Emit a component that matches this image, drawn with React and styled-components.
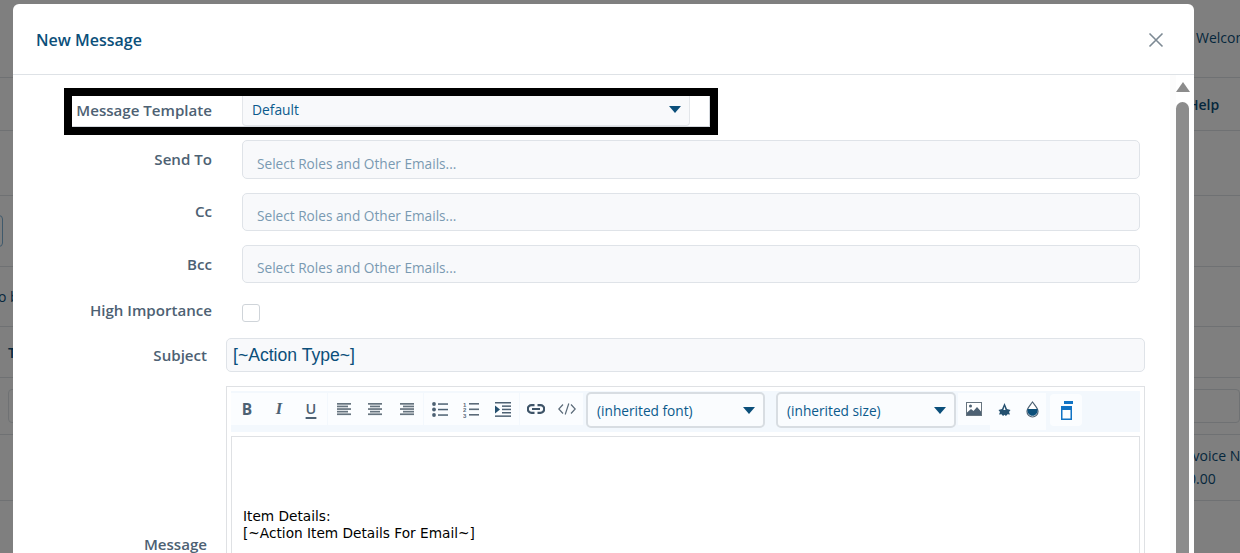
import React from 'react';
import styled, { createGlobalStyle } from 'styled-components';

const GlobalStyle = createGlobalStyle`
  html, body {
    margin: 0;
    height: 100%;
    overflow: hidden;
    background: #fff;
    font-family: "Open Sans", "Noto Sans", sans-serif;
  }
`;

const Page = styled.div`
  position: relative;
  width: 1240px;
  height: 553px;
  overflow: hidden;
`;

const Band = styled.div`
  display: flex;
  align-items: center;
  justify-content: space-between;
  box-sizing: border-box;
  height: ${(p) => p.$height}px;
  padding-left: ${(p) => p.$left || 0}px;
  padding-bottom: ${(p) => p.$lift || 0}px;
  border-bottom: 1px solid #dee2e6;
  color: #0b4f7a;
  font-size: 14px;
  font-weight: ${(p) => p.$weight || 400};
  white-space: nowrap;
`;

const FlushBox = styled.div`
  width: 40px;
  height: 32px;
  margin-left: -37px;
  box-sizing: border-box;
  border: 1px solid #7fb2d6;
  border-radius: 4px;
`;

const ClippedText = styled.span`
  margin-left: -7px;
`;

const WideInput = styled.div`
  width: 1300px;
  height: 34px;
  margin-left: 8px;
  box-sizing: border-box;
  border: 1px solid #dee2e6;
  border-radius: 4px;
`;

const Cell = styled.div`
  line-height: 23px;
  width: 60px;
`;

const Backdrop = styled.div`
  position: absolute;
  inset: 0;
  background: rgba(0, 0, 0, 0.5);
`;

const Modal = styled.div`
  position: absolute;
  left: 13px;
  top: 4px;
  width: 1181px;
  height: 600px;
  background: #fff;
  border-radius: 6px;
  display: flex;
  flex-direction: column;
`;

const Header = styled.div`
  display: flex;
  flex-shrink: 0;
  align-items: center;
  justify-content: space-between;
  box-sizing: border-box;
  height: 71px;
  padding: 1px 30px 0 23px;
  border-bottom: 1px solid #dee2e6;
`;

const Title = styled.h5`
  margin: 0;
  font-size: 16px;
  font-weight: 600;
  color: #0b4f7a;
`;

const Body = styled.div`
  flex: 1;
  display: flex;
  min-height: 0;
`;

const Form = styled.div`
  width: 1157px;
  box-sizing: border-box;
`;

const Scrollbar = styled.div`
  width: 24px;
  box-sizing: border-box;
  padding: 7px 5px 0 6px;
  background: linear-gradient(to right, #fcfcfc 6px, #fff 6px);
  display: flex;
  flex-direction: column;
  align-items: center;
`;

const ScrollArrow = styled.div`
  width: 0;
  height: 0;
  border-left: 7px solid transparent;
  border-right: 7px solid transparent;
  border-bottom: 10px solid #8c8c8c;
`;

const ScrollThumb = styled.div`
  width: 13px;
  flex: 1;
  margin-top: 10px;
  background: #8c8c8c;
  border-radius: 7px 7px 0 0;
`;

const Highlight = styled.div`
  display: flex;
  align-items: flex-start;
  width: 638px;
  height: 31px;
  margin: 21px 0 13px 59px;
  outline: 8px solid #000;
  box-sizing: border-box;
  border-right: 1px solid #d5d9de;
  border-bottom: 1px solid #d5d9de;
`;

const Row = styled.div`
  display: flex;
  align-items: flex-start;
  margin-top: ${(p) => p.$top || 0}px;
`;

const Label = styled.label`
  box-sizing: border-box;
  width: ${(p) => p.$width || 199}px;
  margin-right: ${(p) => p.$gap ?? 30}px;
  margin-top: ${(p) => p.$offset || 0}px;
  text-align: right;
  font-size: 15.1px;
  line-height: 20px;
  font-weight: 600;
  color: #4d6173;
  white-space: nowrap;
`;

const SelectBox = styled.div`
  display: flex;
  align-items: center;
  justify-content: space-between;
  box-sizing: border-box;
  width: 448px;
  height: 30px;
  padding: 0 8px 3px 9px;
  background: #f8f9fb;
  border: 1px solid #e3e6ea;
  border-top: none;
  border-radius: 0 0 4px 4px;
  font-size: 13.8px;
  color: #0b5a8c;
`;

const Input = styled.div`
  box-sizing: border-box;
  width: 898px;
  height: ${(p) => p.$height}px;
  padding: ${(p) => p.$inset}px 14px 0;
  background: #f8f9fb;
  border: 1px solid #dfe3e8;
  border-radius: 5px;
  font-size: 13.65px;
  line-height: 18px;
  color: #7a9ab2;
`;

const Checkbox = styled.div`
  box-sizing: border-box;
  width: 18px;
  height: 18px;
  margin-top: 4px;
  border: 1px solid #cfd4d9;
  border-radius: 3px;
  background: #fff;
`;

const SubjectInput = styled.div`
  box-sizing: border-box;
  width: 919px;
  height: 34px;
  padding: 0 6px;
  background: #f8f9fb;
  border: 1px solid #dfe3e8;
  border-radius: 5px;
  font-family: "Liberation Sans", Arial, sans-serif;
  font-size: 17.6px;
  line-height: 32px;
  color: #0b4f7a;
`;

const Editor = styled.div`
  box-sizing: border-box;
  width: 919px;
  height: 300px;
  padding: 4px;
  border: 1px solid #dfe1e4;
`;

const Toolbar = styled.div`
  display: flex;
  align-items: flex-start;
  box-sizing: border-box;
  height: 41px;
  padding-top: 2px;
  background: #f3f8fd;
`;

const ToolGroup = styled.div`
  display: flex;
  height: 32px;
  margin-left: ${(p) => p.$left || 0}px;
  background: #fbfdff;
`;

const ToolButton = styled.button`
  display: flex;
  align-items: center;
  justify-content: center;
  width: ${(p) => p.$width || 32}px;
  height: ${(p) => p.$height || 32}px;
  padding: 0 0 ${(p) => p.$lift || 0}px ${(p) => p.$shift || 0}px;
  border: none;
  background: ${(p) => p.$bg || 'transparent'};
  border-radius: ${(p) => p.$radius || 0}px;
  margin-top: ${(p) => p.$top || 0}px;
  margin-left: ${(p) => p.$left || 0}px;
`;

const ToolSelect = styled.div`
  display: flex;
  align-items: center;
  justify-content: space-between;
  box-sizing: border-box;
  width: ${(p) => p.$width}px;
  height: 36px;
  margin-top: -1px;
  margin-left: ${(p) => p.$left}px;
  padding: 0 8px 0 9px;
  background: #fafcfe;
  border: 2px solid #d8dde2;
  border-radius: 5px;
  font-size: 13.7px;
  color: #0b5a8c;
`;

const Content = styled.div`
  box-sizing: border-box;
  height: 250px;
  margin-top: 4px;
  padding: 71px 11px 0;
  border: 1px solid #dfe1e4;
  font-family: "DejaVu Sans", Verdana, sans-serif;
  font-size: 13.7px;
  line-height: 17px;
  color: #000;
`;

const Glyph = styled.span`
  font: ${(p) => p.$font || '700 15.5px "Open Sans", sans-serif'};
  color: #4d6173;
  text-decoration: ${(p) => (p.$underline ? 'underline' : 'none')};
  text-decoration-thickness: 1.5px;
  text-underline-offset: 3px;
`;

const Caret = () => (
  <svg width="12" height="7" viewBox="0 0 12 7">
    <path d="M0 0h12L6 7z" fill="#0b4f7a" />
  </svg>
);

const Lines = ({ rows }) => (
  <svg width="14" height="13" viewBox="0 0 14 13" fill="#66747f">
    {rows.map(([x, w], i) => (
      <rect key={i} x={x} y={i * 2.6} width={w} height="1.7" />
    ))}
  </svg>
);

const BulletList = () => (
  <svg width="16" height="15" viewBox="0 0 16 15" fill="#4d6173">
    <circle cx="2" cy="2" r="1.9" />
    <circle cx="2" cy="7.500" r="1.9" />
    <circle cx="2" cy="13" r="1.9" />
    <rect x="6" y="1.300" width="10" height="1.500" />
    <rect x="6" y="6.800" width="10" height="1.500" />
    <rect x="6" y="12.300" width="10" height="1.500" />
  </svg>
);

const NumberList = () => (
  <svg width="16" height="17" viewBox="0 0 16 17" fill="#5b6b79">
    <text x="0" y="5.500" fontSize="6" fontFamily="Liberation Sans, sans-serif" fontWeight="700">1</text>
    <text x="0" y="11" fontSize="6" fontFamily="Liberation Sans, sans-serif" fontWeight="700">2</text>
    <text x="0" y="16.500" fontSize="6" fontFamily="Liberation Sans, sans-serif" fontWeight="700">3</text>
    <rect x="6" y="2" width="10" height="1.600" />
    <rect x="6" y="7.500" width="10" height="1.600" />
    <rect x="6" y="13" width="10" height="1.600" />
  </svg>
);

const Indent = () => (
  <svg width="16" height="15" viewBox="0 0 16 15" fill="#4d6173">
    <rect width="16" height="1.500" />
    <rect x="7" y="3.400" width="9" height="1.500" />
    <rect x="7" y="6.700" width="9" height="1.500" />
    <rect x="7" y="10" width="9" height="1.500" />
    <rect y="13.400" width="16" height="1.500" />
    <path d="M0 3.500l5 4-5 4z" fill="#24506f" />
  </svg>
);

const LinkIcon = () => (
  <svg width="18" height="10" viewBox="0 0 18 10" fill="none" stroke="#3e5468" strokeWidth="2.200">
    <path d="M7.500 1.200H4.600a3.800 3.800 0 0 0 0 7.600h2.900M10.500 1.200h2.900a3.800 3.800 0 0 1 0 7.600h-2.900M5 5h8" />
  </svg>
);

const CodeIcon = () => (
  <svg width="18" height="12" viewBox="0 0 18 12" fill="none" stroke="#5b6b79" strokeWidth="1.200">
    <path d="M5 1.500L.8 6 5 10.500M13 1.500L17.200 6 13 10.500M10.800 .5L7.200 11.500" />
  </svg>
);

const ImageIcon = () => (
  <svg width="16" height="14" viewBox="0 0 16 14">
    <rect x=".5" y=".5" width="15" height="13" fill="#fff" stroke="#66747f" />
    <circle cx="4.500" cy="4" r="1.500" fill="#4d6173" />
    <path d="M1 13V10.500l4-3.500 2.500 2L11 5l4 4.500V13z" fill="#4d6173" />
  </svg>
);

const FontColor = () => (
  <svg width="13" height="13" viewBox="0 0 13 13" fill="#24506f">
    <path d="M6.500 0L9 6l3.500 1-1.500 2 1 2.500-2.500-.3L8 13l-1.500-1.200L5 13l-1.500-1.800-2.500.3L2 9 .5 7 4 6z" />
    <path d="M6.500 3.500L7.600 7H5.400z" fill="#fbfdff" />
  </svg>
);

const DropIcon = () => (
  <svg width="13" height="17" viewBox="0 0 13 17">
    <path d="M6.500 1C4 4.500 1 7 1 10.500a5.500 5.500 0 0 0 11 0C12 7 9 4.500 6.500 1z" fill="#fff" stroke="#4d6173" strokeWidth="1.200" />
    <path d="M1.600 8h9.800c.7 3.500-1.400 6.800-4.900 6.800S.9 11.500 1.600 8z" fill="#0b4f7a" />
  </svg>
);

const TemplateIcon = () => (
  <svg width="13" height="19" viewBox="0 0 13 19" fill="#1173c4">
    <rect x="3" width="9" height="3" />
    <path d="M0 5h11v14H0zM1.500 9v8.500h8V9z" fillRule="evenodd" />
  </svg>
);

const CloseIcon = () => (
  <svg width="16" height="16" viewBox="0 0 16 16" fill="none" stroke="#7d8a94" strokeWidth="1.600">
    <path d="M1.500 1.500l13 13M14.500 1.500l-13 13" />
  </svg>
);

const addressFields = [
  { label: 'Send To', top: 0, height: 39, offset: 9, inset: 14 },
  { label: 'Cc', top: 14, height: 38, offset: 8, inset: 13 },
  { label: 'Bcc', top: 14, height: 38, offset: 9, inset: 13 },
];

export default function App() {
  return (
    <Page>
      <GlobalStyle />
      <Band $height={78} $left={1196} $lift={3}>Welcome</Band>
      <Band $height={53} $left={1188} $weight={600}>Help</Band>
      <Band $height={65} />
      <Band $height={71}><FlushBox /></Band>
      <Band $height={60}><ClippedText>to be</ClippedText></Band>
      <Band $height={51} $left={8} $weight={600}>T</Band>
      <Band $height={57}><WideInput /></Band>
      <Band $height={66} $left={12} $lift={2}>
        <span>I</span>
        <Cell>Invoice No<br />$0.00</Cell>
      </Band>
      <Backdrop />
      <Modal>
        <Header>
          <Title>New Message</Title>
          <CloseIcon />
        </Header>
        <Body>
          <Form>
            <Highlight>
              <Label $width={140} $offset={4}>Message Template</Label>
              <SelectBox>
                Default
                <Caret />
              </SelectBox>
            </Highlight>
            {addressFields.map((f) => (
              <Row key={f.label} $top={f.top}>
                <Label $offset={f.offset}>{f.label}</Label>
                <Input $height={f.height} $inset={f.inset}>Select Roles and Other Emails...</Input>
              </Row>
            ))}
            <Row $top={17}>
              <Label>High Importance</Label>
              <Checkbox />
            </Row>
            <Row $top={16}>
              <Label $width={194} $gap={19} $offset={7}>Subject</Label>
              <SubjectInput>[~Action Type~]</SubjectInput>
            </Row>
            <Row $top={14}>
              <Label $width={194} $gap={19} $offset={148}>Message</Label>
              <Editor>
                <Toolbar>
                  <ToolGroup>
                    <ToolButton><Glyph>B</Glyph></ToolButton>
                    <ToolButton><Glyph $font={'italic 700 16.5px "Liberation Serif", serif'}>I</Glyph></ToolButton>
                    <ToolButton $lift={2}><Glyph $underline $font={'600 14.5px "Open Sans", sans-serif'}>U</Glyph></ToolButton>
                  </ToolGroup>
                  <ToolGroup $left={1}>
                    <ToolButton $width={31}><Lines rows={[[0, 14], [0, 11], [0, 14], [0, 11], [0, 14]]} /></ToolButton>
                    <ToolButton><Lines rows={[[0, 14], [2, 10], [0, 14], [2, 10], [0, 14]]} /></ToolButton>
                    <ToolButton><Lines rows={[[0, 14], [3, 11], [0, 14], [3, 11], [0, 14]]} /></ToolButton>
                  </ToolGroup>
                  <ToolGroup $left={1}>
                    <ToolButton $width={31}><BulletList /></ToolButton>
                    <ToolButton><NumberList /></ToolButton>
                    <ToolButton><Indent /></ToolButton>
                  </ToolGroup>
                  <ToolGroup $left={1}>
                    <ToolButton $width={31}><LinkIcon /></ToolButton>
                    <ToolButton><CodeIcon /></ToolButton>
                  </ToolGroup>
                  <ToolSelect $width={179} $left={3}>
                    (inherited font)
                    <Caret />
                  </ToolSelect>
                  <ToolSelect $width={180} $left={11}>
                    (inherited size)
                    <Caret />
                  </ToolSelect>
                  <ToolButton $left={2} $bg="#fbfdff"><ImageIcon /></ToolButton>
                  <ToolButton $width={28} $height={37} $lift={5} $bg="#fbfdff"><FontColor /></ToolButton>
                  <ToolButton $width={28} $height={37} $lift={5} $bg="#fbfdff"><DropIcon /></ToolButton>
                  <ToolButton $left={4} $top={1} $shift={3} $bg="#fbfdff" $radius={4}><TemplateIcon /></ToolButton>
                </Toolbar>
                <Content>
                  Item Details:
                  <br />
                  [~Action Item Details For Email~]
                </Content>
              </Editor>
            </Row>
          </Form>
          <Scrollbar>
            <ScrollArrow />
            <ScrollThumb />
          </Scrollbar>
        </Body>
      </Modal>
    </Page>
  );
}
